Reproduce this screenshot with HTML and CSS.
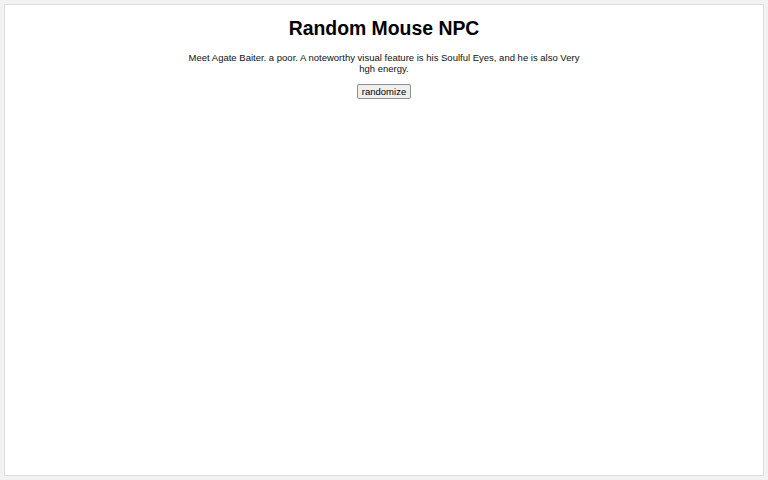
FILE: index.html
```html
<!DOCTYPE html>
<html lang="en">
    <head>
        <meta charset="utf-8" />
        <meta name="viewport" content="width=device-width, initial-scale=1" />
        <title>Random Mouse NPC</title>
        <link rel="stylesheet" href="styles.css">
    </head>
    <body>
        <main class="sheet">
            <h1>Random Mouse NPC</h1>
            <p class="npc">Meet Agate Baiter. a poor. A noteworthy visual feature is his Soulful Eyes, and he is also Very hgh energy.</p>
            <button class="roll">randomize</button>
        </main>
    </body>
</html>
```

FILE: styles.css
```css
* { margin: 0; padding: 0; box-sizing: border-box; }
body { font-family: "Liberation Sans", Arial, sans-serif; background: #f2f2f2; padding: 4px; height: 480px; }

.sheet {
    height: 472px;
    background: #fff;
    border: 1px solid #dcdcdc;
    text-align: center;
    padding-top: 12px;
}

h1 { font-size: 19.4px; font-weight: bold; color: #000; line-height: 23px; }

.npc {
    width: 400px;
    margin: 12px auto 0 auto;
    font-size: 9.5px;
    line-height: 11px;
    color: #111;
}

.roll {
    margin-top: 10px;
    font-family: "Liberation Sans", Arial, sans-serif;
    font-size: 9.5px;
    padding: 1px 4px;
    background: #efefef;
    border: 1px solid #8f8f8f;
    border-radius: 2px;
    color: #000;
}
```
